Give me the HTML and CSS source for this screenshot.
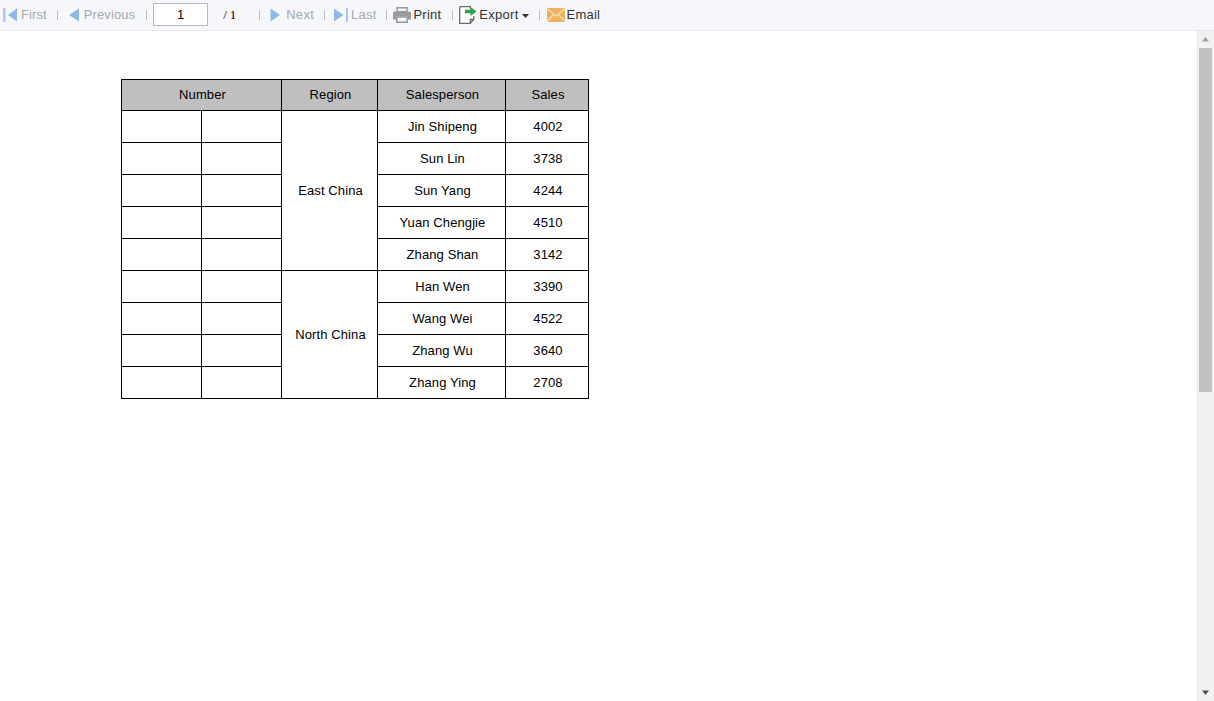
FILE: index.html
```html
<!DOCTYPE html>
<html lang="en">
<head>
<meta charset="utf-8">
<title>Report</title>
<link rel="stylesheet" href="styles.css">
</head>
<body>
<header class="toolbar">
  <div class="tool off first"><svg class="ic" width="15" height="16" viewBox="0 0 15 16"><rect x="0" y="1" width="2.500" height="14" fill="#a9c8ea"/><path d="M14 1.500V14.500L5 8Z" fill="#8fb9e6"/></svg><span>First</span></div>
  <i class="sep"></i>
  <div class="tool off prev"><svg class="ic" width="12" height="16" viewBox="0 0 12 16"><path d="M11 1.500V14.500L1 8Z" fill="#8fb9e6"/></svg><span>Previous</span></div>
  <i class="sep"></i>
  <input class="page" value="1" aria-label="Page">
  <span class="total">/1</span>
  <i class="sep"></i>
  <div class="tool off next"><svg class="ic" width="11" height="16" viewBox="0 0 11 16"><path d="M0.500 1.500V14.500L10 8Z" fill="#8fb9e6"/></svg><span>Next</span></div>
  <i class="sep"></i>
  <div class="tool off last"><svg class="ic" width="14" height="16" viewBox="0 0 14 16"><path d="M0 1.500V14.500L9.500 8Z" fill="#8fb9e6"/><rect x="12" y="1" width="2" height="14" fill="#a9c8ea"/></svg><span>Last</span></div>
  <i class="sep"></i>
  <div class="tool print"><svg class="ic" width="18" height="16" viewBox="0 0 18 16"><path d="M4 .800h10v4H4z" fill="#f5f7fa" stroke="#9a9a9a" stroke-width="1.500"/><path d="M2 4.500h14a2 2 0 0 1 2 2v6h-3v-3H3v3H0v-6a2 2 0 0 1 2-2z" fill="#9a9a9a"/><path d="M3.800 10h10.400v5.200H3.800z" fill="#f5f7fa" stroke="#9a9a9a" stroke-width="1.500"/></svg><span>Print</span></div>
  <i class="sep"></i>
  <div class="tool export"><svg class="ic" width="18" height="18" viewBox="0 0 18 18"><path d="M.700.700h10.600v2M.700.700v16.600h10.600l3.500-4V10M11.300 17.300v-4h3.500" fill="#fff" stroke="#6a6a6a" stroke-width="1.300"/><path d="M6 3.800h5.500V1l6 4.500-6 4.500V7.200H6z" fill="#2fa24b"/></svg><span>Export</span><svg class="caret" width="7" height="4" viewBox="0 0 7 4"><path d="M0 0h7L3.500 4z" fill="#333"/></svg></div>
  <i class="sep"></i>
  <div class="tool email"><svg class="ic" width="18" height="14" viewBox="0 0 18 14"><rect width="18" height="14" fill="#ecb25f"/><path d="M0 .500L9 8l9-7.500M0 13.500L6.500 6.500M18 13.500L11.500 6.500" fill="none" stroke="#f9dfb4" stroke-width="1.200"/></svg><span>Email</span></div>
</header>
<div class="body">
  <main class="content">
    <table class="report">
      <colgroup><col class="c1"><col class="c2"><col class="c3"><col class="c4"><col class="c5"></colgroup>
      <thead>
        <tr><th colspan="2">Number</th><th>Region</th><th>Salesperson</th><th>Sales</th></tr>
      </thead>
      <tbody>
        <tr><td></td><td></td><td rowspan="5">East China</td><td>Jin Shipeng</td><td>4002</td></tr>
        <tr><td></td><td></td><td>Sun Lin</td><td>3738</td></tr>
        <tr><td></td><td></td><td>Sun Yang</td><td>4244</td></tr>
        <tr><td></td><td></td><td>Yuan Chengjie</td><td>4510</td></tr>
        <tr><td></td><td></td><td>Zhang Shan</td><td>3142</td></tr>
        <tr><td></td><td></td><td rowspan="4">North China</td><td>Han Wen</td><td>3390</td></tr>
        <tr><td></td><td></td><td>Wang Wei</td><td>4522</td></tr>
        <tr><td></td><td></td><td>Zhang Wu</td><td>3640</td></tr>
        <tr><td></td><td></td><td>Zhang Ying</td><td>2708</td></tr>
      </tbody>
    </table>
  </main>
  <aside class="scrollbar">
    <svg class="arrow" width="17" height="17" viewBox="0 0 17 17"><path d="M8.500 6L12 10.500H5z" fill="#a0a0a0"/></svg>
    <div class="track"><div class="thumb"></div></div>
    <svg class="arrow" width="17" height="17" viewBox="0 0 17 17"><path d="M5 6.500h7L8.500 11z" fill="#505050"/></svg>
  </aside>
</div>
</body>
</html>
```
FILE: styles.css
```css
* { box-sizing: border-box; }
html, body { margin: 0; height: 100%; overflow: hidden; }
body {
  display: flex;
  flex-direction: column;
  background: #fff;
  font-family: "Liberation Sans", Arial, sans-serif;
  font-size: 13px;
  color: #000;
}
.toolbar {
  flex: 0 0 31px;
  display: flex;
  align-items: center;
  padding: 0 0 1px 3px;
  background: #f5f7fa;
  border-bottom: 1px solid #e6e8ec;
  color: #333;
}
.tool { display: flex; align-items: center; }
.tool.off { color: #a6a9ad; }
.ic { display: block; flex: none; }
.sep { flex: none; width: 1px; height: 10px; background: #b9bcc0; margin: 0 10px; }
.first span { margin: 0 0 0 3px; letter-spacing: .1px; }
.prev span { margin: 0 1px 0 4px; letter-spacing: .1px; }
.next span { margin: 0 0 0 5px; letter-spacing: .3px; }
.last { margin-left: -1px; }
.last span { margin: 0 0 0 3px; letter-spacing: .2px; }
.print { margin-left: -4px; }
.print span { margin: 0 1px 0 2px; letter-spacing: .2px; }
.export { margin-left: -4px; }
.export span { margin-left: 2px; letter-spacing: .3px; }
.email { margin-left: -3px; }
.email span { margin-left: 2px; letter-spacing: .2px; }
.caret { margin-left: 3px; margin-top: 3px; }
.page {
  width: 55px;
  height: 23px;
  margin-left: -4px;
  border: 1px solid #b5b8c8;
  background: #fff;
  text-align: center;
  font: 13px "Liberation Sans", Arial, sans-serif;
  color: #000;
  padding: 0;
}
.total {
  width: 41px;
  padding-left: 15px;
  font: 13px "Liberation Serif", serif;
  letter-spacing: 3px;
  color: #000;
  white-space: nowrap;
}
.body { flex: 1; min-height: 0; display: flex; }
.content { flex: 1; min-width: 0; padding: 48px 0 0 121px; }
.report {
  border-collapse: collapse;
  table-layout: fixed;
  width: 468px;
}
.c1, .c2 { width: 80px; }
.c3 { width: 96px; }
.c4 { width: 128px; }
.c5 { width: 83px; }
.report th, .report td {
  border: 1px solid #000;
  height: 32px;
  padding: 0 0 0 2px;
  text-align: center;
  vertical-align: middle;
  font-weight: 400;
  font-size: 13px;
  line-height: 15px;
  letter-spacing: .1px;
}
.report th { background: #bfbfbf; height: 31px; padding-bottom: 2px; }
.scrollbar {
  flex: 0 0 17px;
  display: flex;
  flex-direction: column;
  background: #f1f1f1;
  border-left: 1px solid #ececec;
}
.arrow { flex: none; display: block; margin-left: -1px; }
.track { flex: 1; padding: 0 2px 0 1px; }
.thumb { height: 344px; background: #c1c1c1; }
```
